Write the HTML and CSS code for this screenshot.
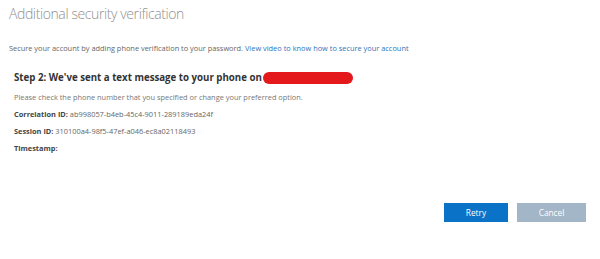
FILE: index.html
```html
<!DOCTYPE html>
<html>
<head>
<meta charset="utf-8">
<link rel="stylesheet" href="styles.css">
</head>
<body>
<div class="page">
  <h1 class="title">Additional security verification</h1>
  <p class="intro">Secure your account by adding phone verification to your password. <a class="link" href="#">View video to know how to secure your account</a></p>
  <div class="step">
    <h2 class="step-title">Step 2: We've sent a text message to your phone on <span class="redact"></span></h2>
    <p class="line muted">Please check the phone number that you specified or change your preferred option.</p>
    <p class="line"><b>Correlation ID:</b> ab998057-b4eb-45c4-9011-289189eda24f</p>
    <p class="line"><b>Session ID:</b> 310100a4-98f5-47ef-a046-ec8a02118493</p>
    <p class="line"><b>Timestamp:</b></p>
  </div>
  <div class="actions">
    <button class="btn primary">Retry</button>
    <button class="btn secondary">Cancel</button>
  </div>
</div>
</body>
</html>
```

FILE: styles.css
```css
html, body { margin: 0; padding: 0; background: #fff; }
body { font-family: "Open Sans", "Noto Sans", sans-serif; color: #555; }
.page { width: 600px; height: 259px; padding: 0 14px 0 9px; box-sizing: border-box; }
.title { margin: 0; padding-top: 2px; font-size: 14px; font-weight: 300; color: #8f8f8f; line-height: 24px; letter-spacing: -0.4px; }
.intro { margin: 16px 0 0; font-size: 7.4px; line-height: 12px; color: #666; }
.link { color: #2f74c0; text-decoration: none; }
.step { padding-left: 5px; margin-top: 16px; }
.step-title { margin: 0; font-size: 9.7px; font-weight: 700; color: #333; line-height: 16px; display: flex; align-items: center; }
.redact { display: inline-block; width: 90px; height: 12px; border-radius: 6px; background: #e3191b; margin-left: 1px; }
.line { margin: 5px 0 0; font-size: 7.4px; line-height: 12px; color: #666; }
.line b { color: #444; font-weight: 700; }
.muted { color: #777; }
.actions { display: flex; justify-content: flex-end; gap: 9px; margin-top: 49px; }
.btn { height: 19px; border: 0; padding: 0; font-family: inherit; font-size: 8.3px; color: #fff; }
.primary { width: 64px; background: #0a72c7; }
.secondary { width: 69px; background: #a2b6c8; }
```
